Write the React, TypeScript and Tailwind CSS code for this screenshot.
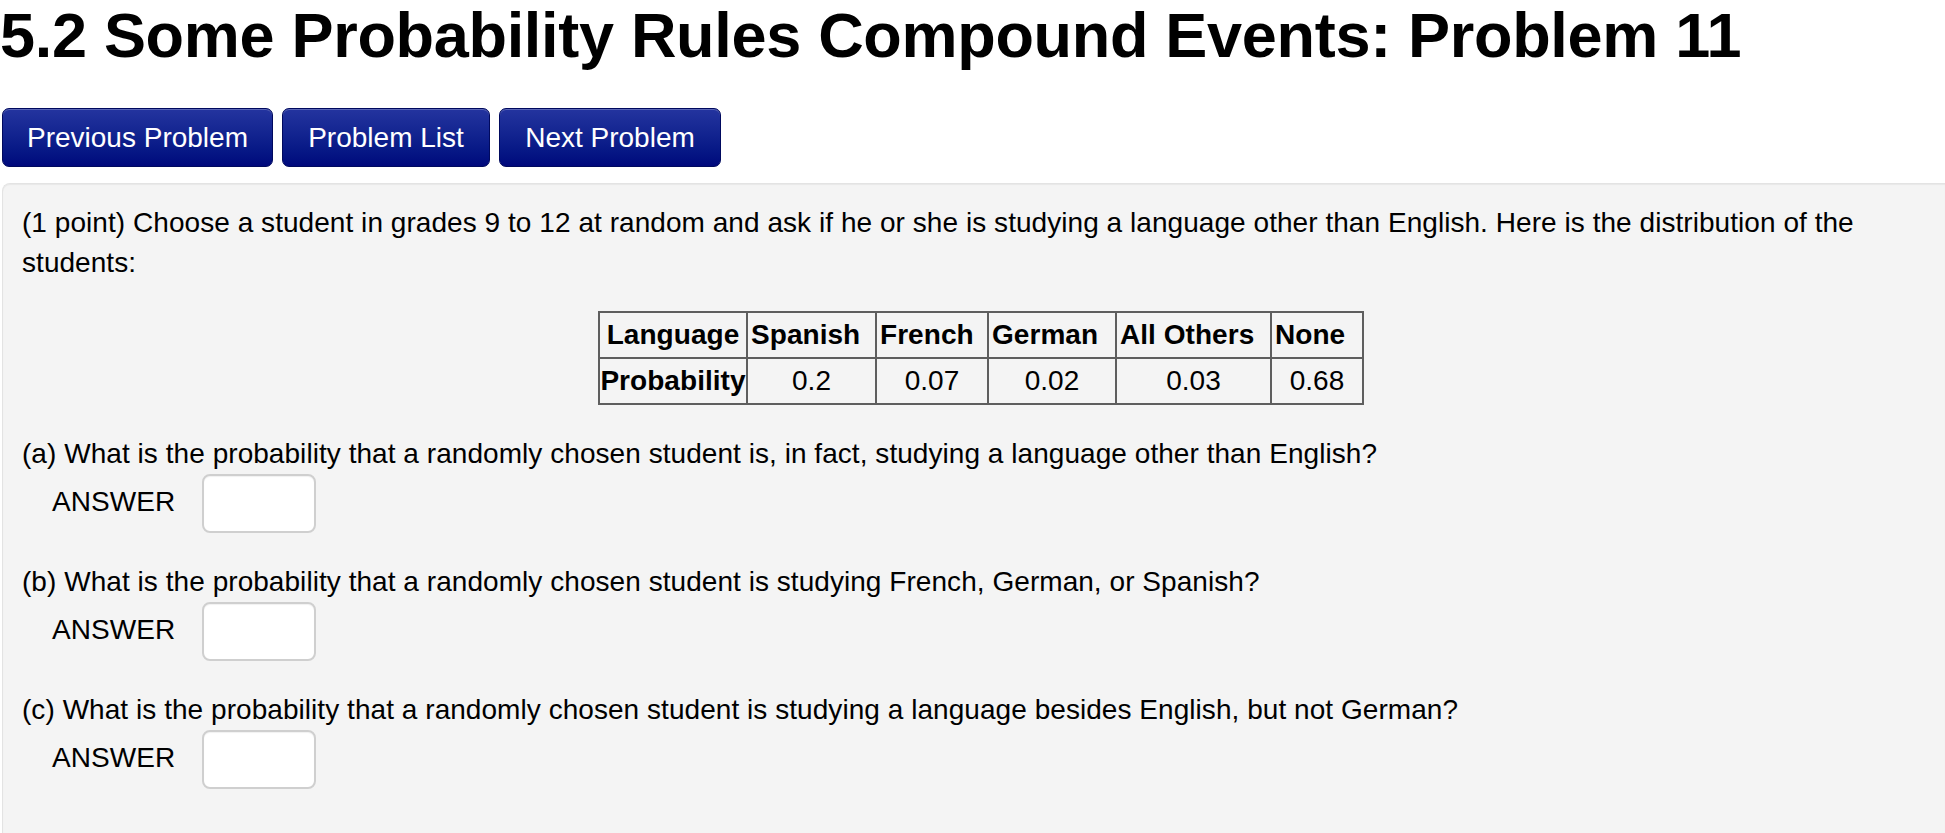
const buttons = [
  { label: "Previous Problem", width: "w-[271px]" },
  { label: "Problem List", width: "w-[208px]" },
  { label: "Next Problem", width: "w-[222px]" },
];

const languages = ["Spanish", "French", "German", "All Others", "None"];
const probabilities = ["0.2", "0.07", "0.02", "0.03", "0.68"];
const colWidths = ["w-[148px]", "w-[129px]", "w-[112px]", "w-[128px]", "w-[155px]", "w-[92px]"];

const questions = [
  "(a) What is the probability that a randomly chosen student is, in fact, studying a language other than English?",
  "(b) What is the probability that a randomly chosen student is studying French, German, or Spanish?",
  "(c) What is the probability that a randomly chosen student is studying a language besides English, but not German?",
];

function AnswerRow() {
  return (
    <div className="flex items-center pl-[30px]">
      <span className="-mt-[4px] w-[150px] leading-[40px]">ANSWER</span>
      <input
        type="text"
        className="h-[59px] w-[114px] rounded-[8px] border-2 border-[#cfcfcf] bg-white shadow-[inset_0_1px_1px_rgba(0,0,0,0.06)] outline-none"
      />
    </div>
  );
}

export default function App() {
  return (
    <div className="h-screen overflow-hidden bg-white text-black [font-family:'Liberation_Sans',Arial,sans-serif]">
      <h1 className="text-[63px] font-bold leading-[70px] tracking-[-0.3px]">
        5.2 Some Probability Rules Compound Events: Problem 11
      </h1>

      <div className="mt-[38px] flex gap-[9px] pl-[2px]">
        {buttons.map((b) => (
          <button
            key={b.label}
            type="button"
            className={`${b.width} flex h-[59px] items-center justify-center rounded-[7px] border border-[#00095e] bg-gradient-to-b from-[#24349f] to-[#00087c] text-[28px] text-white shadow-[inset_0_1px_0_rgba(255,255,255,0.25)]`}
          >
            {b.label}
          </button>
        ))}
      </div>

      <div className="ml-[2px] mt-[16px] h-[650px] rounded-tl-[8px] border border-b-0 border-r-0 border-[#e3e3e3] bg-[#f4f4f4] px-[19px] pt-[19px] text-[28px] leading-[40px] tracking-[0.05px] shadow-[inset_0_1px_1px_rgba(0,0,0,0.05)]">
        <p>
          (1 point) Choose a student in grades 9 to 12 at random and ask if he or she is studying a language other than
          English. Here is the distribution of the students:
        </p>

        <table className="ml-[576px] mt-[28px] w-[766px] table-fixed border-collapse border-2 border-[#5e5e5e]">
          <colgroup>
            {colWidths.map((w, i) => (
              <col key={i} className={w} />
            ))}
          </colgroup>
          <tbody>
            <tr className="h-[46px]">
              <th className="border-2 border-[#5e5e5e] px-[2px] text-center font-bold">Language</th>
              {languages.map((l) => (
                <th key={l} className="border-2 border-[#5e5e5e] px-[3px] text-left font-bold">
                  {l}
                </th>
              ))}
            </tr>
            <tr className="h-[46px]">
              <th className="border-2 border-[#5e5e5e] px-0 text-center font-bold">Probability</th>
              {probabilities.map((p, i) => (
                <td key={i} className="border-2 border-[#5e5e5e] text-center">
                  {p}
                </td>
              ))}
            </tr>
          </tbody>
        </table>

        <div className="mt-[29px] flex flex-col gap-[29px]">
          {questions.map((q) => (
            <div key={q}>
              <p>{q}</p>
              <AnswerRow />
            </div>
          ))}
        </div>
      </div>
    </div>
  );
}
